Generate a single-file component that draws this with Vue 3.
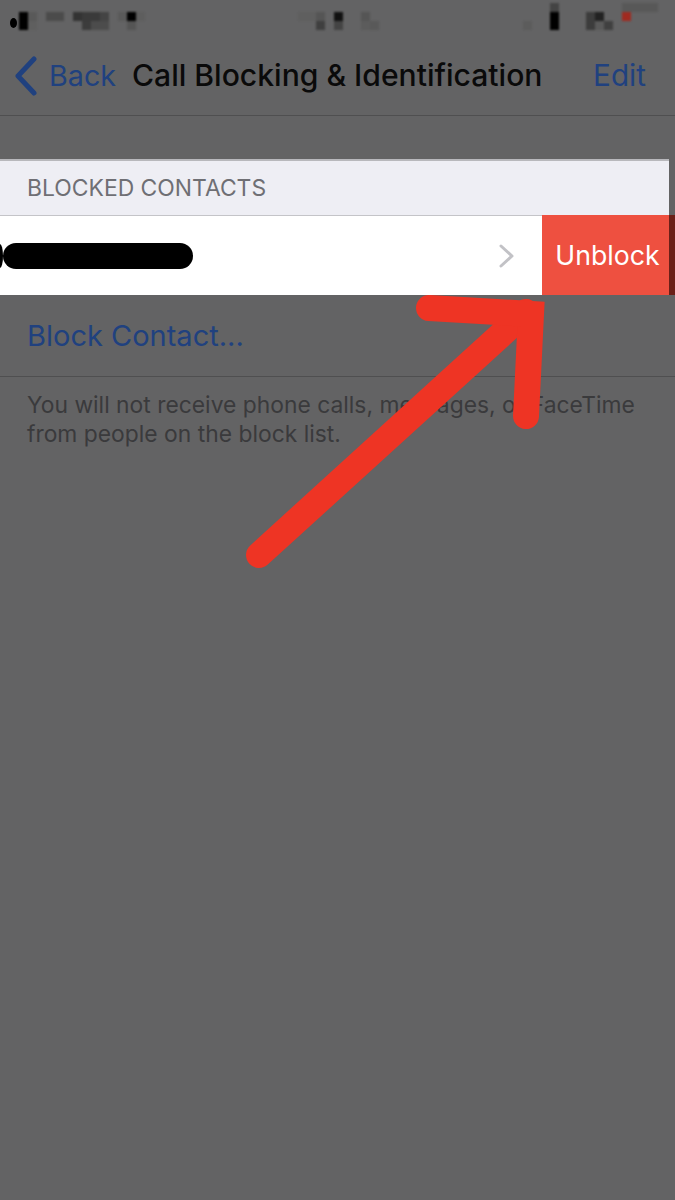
<script setup>
const tiles = [
  [3, 2, 1, 2, '#000'],
  [4, 2, 1, 1, '#595959'], [4, 3, 1, 1, '#5f5f5f'],
  [6, 2, 2, 1, '#4b4b4b'],
  [9, 2, 1, 1, '#333'], [10, 2, 2, 1, '#3a3a3a'], [12, 2, 1, 1, '#444'],
  [10, 3, 1, 1, '#3c3c3c'], [11, 3, 2, 1, '#4c4c4c'],
  [14, 2, 1, 1, '#5a5a5a'], [15, 2, 1, 1, '#000'], [16, 2, 1, 1, '#5e5e5e'], [15, 3, 1, 1, '#555'],
  [34, 2, 2, 1, '#5f5f5f'], [36, 2, 1, 1, '#555'], [36, 3, 1, 1, '#3f3f3f'],
  [38, 2, 1, 1, '#111'], [38, 3, 1, 1, '#444'],
  [41, 2, 1, 1, '#555'], [41, 3, 1, 1, '#5c5c5c'], [42, 3, 1, 1, '#595959'],
  [59, 3, 1, 1, '#5c5c5c'],
  [62, 1, 1, 1, '#444'], [62, 2, 1, 2, '#000'],
  [66, 2, 1, 2, '#3c3c3c'], [67, 2, 1, 1, '#222'], [67, 3, 1, 1, '#5a5a5a'], [68, 3, 1, 1, '#404040'],
  [70, 1, 4, 1, '#585858'], [70, 2, 1, 1, '#a02a20']
].map(([col, row, w, h, color]) => ({
  gridColumn: `${col} / span ${w}`,
  gridRow: `${row} / span ${h}`,
  background: color
}))
</script>

<template>
  <div class="screen">
    <div class="status">
      <span class="dot"></span>
      <div class="mosaic">
        <i v-for="(tile, i) in tiles" :key="i" :style="tile"></i>
      </div>
    </div>

    <nav class="nav">
      <div class="back">
        <svg class="back-icon" width="24" height="40" viewBox="0 0 24 40">
          <path d="M20 3 L4 20 L20 37" />
        </svg>
        <span>Back</span>
      </div>
      <h1>Call Blocking &amp; Identification</h1>
      <span class="edit">Edit</span>
    </nav>

    <section class="group">
      <h2>BLOCKED CONTACTS</h2>
      <div class="row">
        <div class="contact">
          <span class="nub"></span>
          <span class="redact"></span>
          <svg class="chev" width="16" height="24" viewBox="0 0 16 24">
            <path d="M2 2 L13 12 L2 22" />
          </svg>
        </div>
        <button class="unblock">Unblock</button>
        <span class="edge"></span>
      </div>
    </section>

    <div class="action">Block Contact...</div>
    <p class="note">You will not receive phone calls, messages, or FaceTime<br />from people on the block list.</p>

    <svg class="arrow" width="675" height="1200" viewBox="0 0 675 1200">
      <path d="M259 555 L526 312" />
      <path d="M429 308 L531 314 L526 416" />
    </svg>
  </div>
</template>

<style>
html, body { margin: 0; background: #636364; }
</style>

<style scoped>
.screen {
  position: relative;
  width: 675px;
  height: 1200px;
  overflow: hidden;
  background: #636364;
  font-family: Inter, "Liberation Sans", sans-serif;
}
.status {
  position: relative;
  height: 46px;
}
.dot {
  position: absolute;
  left: 10px;
  top: 18px;
  width: 7px;
  height: 10px;
  border-radius: 50%;
  background: #000;
}
.mosaic {
  display: grid;
  grid-template-columns: repeat(75, 9px);
  grid-template-rows: repeat(3, 9px);
  padding: 3px 0 0 1px;
  filter: blur(0.8px);
}
.nav {
  display: flex;
  align-items: center;
  height: 60px;
  border-bottom: 1px solid #4f4f50;
  padding: 0 29px 9px 14px;
}
.back {
  display: flex;
  align-items: center;
  gap: 11px;
  width: 118px;
  color: #20417f;
  font-size: 28.7px;
}
.back span,
.edit,
h1 {
  position: relative;
  top: -1px;
}
.back-icon path {
  fill: none;
  stroke: #20417f;
  stroke-width: 5;
  stroke-linecap: round;
  stroke-linejoin: round;
}
h1 {
  flex: 1;
  margin: 0;
  color: #0a0a0a;
  font-size: 30.1px;
  font-weight: 500;
  white-space: nowrap;
}
.edit {
  color: #20417f;
  font-size: 29.7px;
}
.group {
  margin-top: 43px;
}
h2 {
  margin: 0;
  width: 669px;
  height: 56px;
  box-sizing: border-box;
  padding-left: 27px;
  line-height: 55px;
  border-top: 2px solid #b8b8bc;
  background: #eeeef4;
  color: #6f6f74;
  font-size: 22.9px;
  font-weight: 400;
}
.row {
  display: flex;
  height: 80px;
}
.contact {
  flex: 1;
  display: flex;
  align-items: center;
  background: #fff;
  border-top: 1px solid #c4c4c8;
}
.nub {
  width: 6px;
  height: 24px;
  margin-left: -3px;
  border-radius: 50%;
  background: #000;
}
.redact {
  width: 190px;
  height: 26px;
  border-radius: 13px;
  background: #000;
}
.chev {
  margin-left: auto;
  margin-right: 27px;
}
.chev path {
  fill: none;
  stroke: #c2c2c6;
  stroke-width: 3;
  stroke-linecap: round;
  stroke-linejoin: round;
}
.unblock {
  width: 127px;
  border: 0;
  padding: 0 0 0 4px;
  background: #ee5040;
  color: #fff;
  font-family: inherit;
  font-size: 26.7px;
  font-weight: 400;
}
.edge {
  width: 6px;
  background: #6b2018;
}
.action {
  height: 82px;
  box-sizing: border-box;
  padding-left: 27px;
  line-height: 81px;
  border-bottom: 1px solid #4f4f50;
  color: #20417f;
  font-size: 29px;
}
.note {
  margin: 14px 0 0;
  padding-left: 27px;
  color: #3a3a3c;
  font-size: 22.85px;
  line-height: 29px;
  white-space: nowrap;
}
.arrow {
  position: absolute;
  left: 0;
  top: 0;
  pointer-events: none;
}
.arrow path {
  fill: none;
  stroke: #ee3424;
  stroke-width: 26;
  stroke-linecap: round;
  stroke-linejoin: miter;
}
</style>
